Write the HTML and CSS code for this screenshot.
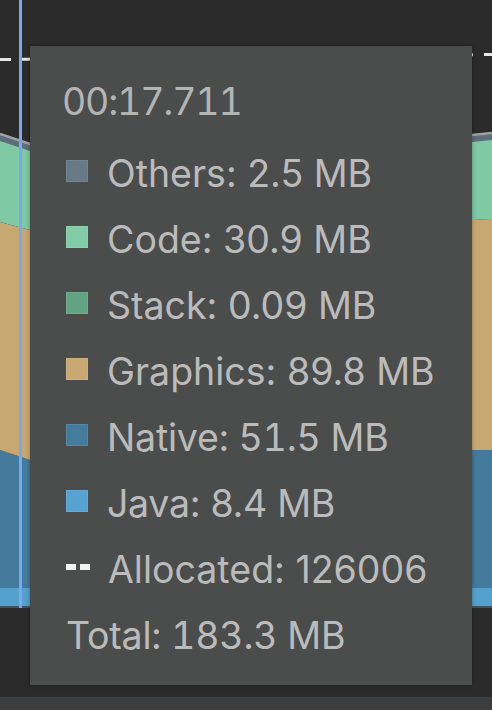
FILE: index.html
```html
<!DOCTYPE html>
<html>
<head>
<meta charset="utf-8">
<link rel="stylesheet" href="styles.css">
</head>
<body>
<div class="stage">
  <div class="chart">
    <svg class="canvas" width="492" height="697" viewBox="0 0 492 697">
      <polygon fill="#447a9b" points="0,450 30,460 472,450 492,448 492,606 0,606"/>
      <rect x="0" y="588" width="492" height="18" fill="#55a1ce"/>
      <rect x="0" y="606" width="492" height="2" fill="#3e5262"/>
      <polygon fill="#c7a872" points="0,222 30,230 472,220 492,219 492,450 472,450 30,460 0,450"/>
      <polygon fill="#7fcaa5" points="0,139 30,149 472,140 492,138 492,219 472,220 30,230 0,222"/>
      <polygon fill="#5d6f7b" points="0,135 30,145 472,136 492,134 492,140 472,142 30,151 0,141"/>
      <polyline fill="none" stroke="#9ea3a6" stroke-width="2.5" points="0,134 30,144 472,135 492,133"/>
      <line x1="0" y1="59.5" x2="492" y2="54.5" stroke="#e6e6e6" stroke-width="3" stroke-dasharray="11 11"/>
      <rect x="19" y="0" width="3" height="608" fill="#7aa8f0"/>
    </svg>
    <div class="tooltip">
      <div class="time">00:17.711</div>
      <ul class="legend">
        <li class="row"><span class="swatch others"></span><span class="label">Others: 2.5 MB</span></li>
        <li class="row"><span class="swatch code"></span><span class="label">Code: 30.9 MB</span></li>
        <li class="row"><span class="swatch stack"></span><span class="label">Stack: 0.09 MB</span></li>
        <li class="row"><span class="swatch graphics"></span><span class="label">Graphics: 89.8 MB</span></li>
        <li class="row"><span class="swatch native"></span><span class="label tnum">Native: 51.5 MB</span></li>
        <li class="row"><span class="swatch java"></span><span class="label java-label">Java: 8.4 MB</span></li>
        <li class="row alloc"><span class="dash"><i></i><i></i></span><span class="label">Allocated: 126006</span></li>
        <li class="row total"><span class="label tnum">Total: 183.3 MB</span></li>
      </ul>
    </div>
  </div>
  <div class="statusbar"></div>
</div>
</body>
</html>
```

FILE: styles.css
```css
* { box-sizing: border-box; }
html, body { margin: 0; padding: 0; }
body {
  background: #2b2b2b;
  font-family: Inter, "Noto Sans", sans-serif;
  width: 492px;
  height: 710px;
  overflow: hidden;
}
.stage {
  width: 492px;
  height: 710px;
  display: flex;
  flex-direction: column;
}
.chart {
  position: relative;
  height: 697px;
  flex: none;
}
.canvas {
  position: absolute;
  left: 0;
  top: 0;
  display: block;
}
.statusbar {
  flex: 1;
  background: #3b3d3e;
}
.tooltip {
  position: absolute;
  left: 30px;
  top: 46px;
  width: 442px;
  height: 639px;
  background: #4b4d4d;
  box-shadow: 0 0 4px rgba(0, 0, 0, 0.35);
  padding: 23px 0 0 0;
  display: flex;
  flex-direction: column;
}
.time {
  height: 66px;
  line-height: 66px;
  font-size: 37.5px;
  font-variant-numeric: tabular-nums;
  letter-spacing: -1.2px;
  color: #b4b4b4;
  padding-left: 32px;
  margin-bottom: 5.5px;
}
.legend {
  list-style: none;
  margin: 0;
  padding: 0 0 0 36px;
}
.row {
  height: 66px;
  display: flex;
  align-items: center;
  gap: 19px;
}
.label {
  font-size: 37.5px;
  line-height: 66px;
  color: #bbbbbb;
  white-space: nowrap;
}
.tnum {
  font-variant-numeric: tabular-nums;
  letter-spacing: -0.2px;
}
.java-label { letter-spacing: -0.3px; }
.swatch {
  width: 22px;
  height: 22px;
  flex: none;
  margin-bottom: 6px;
  border: 1px solid rgba(255, 255, 255, 0.08);
}
.others { background: #677a87; }
.code { background: #82cda8; }
.stack { background: #62a383; }
.graphics { background: #c9a873; }
.native { background: #457c9c; }
.java { background: #57a2d0; }
.alloc { gap: 18px; }
.dash {
  width: 24px;
  height: 6px;
  flex: none;
  display: flex;
  gap: 4px;
  margin-bottom: 6px;
}
.dash i {
  flex: 1;
  background: #f2f2f2;
}
```
